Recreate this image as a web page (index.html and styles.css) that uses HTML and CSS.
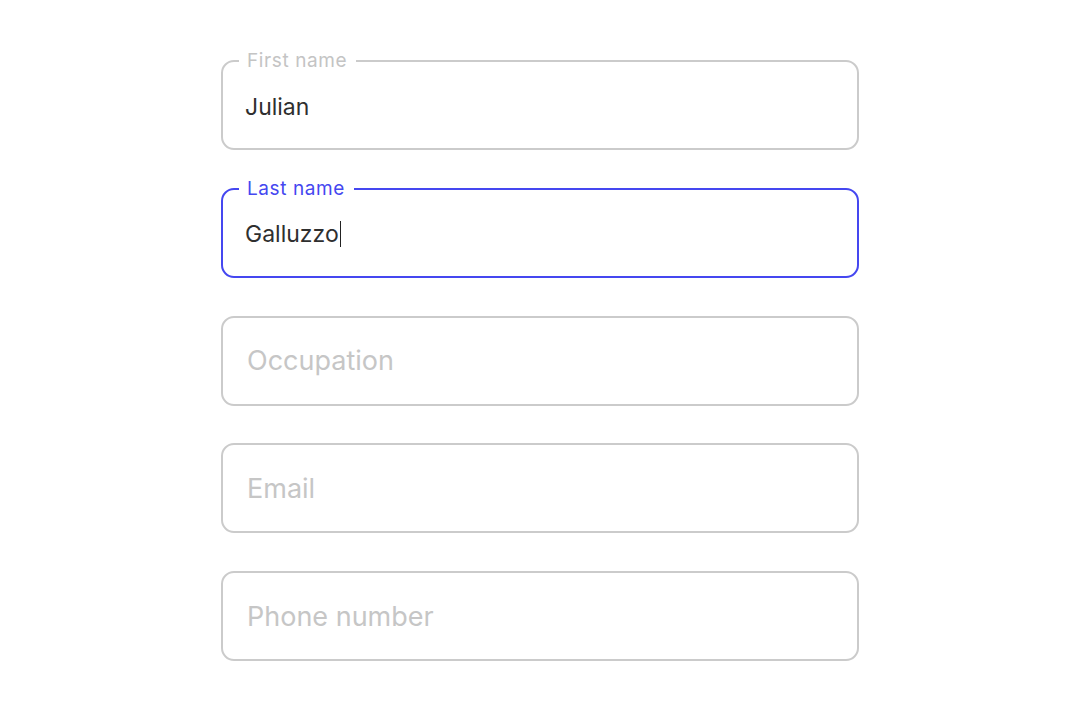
FILE: index.html
```html
<!DOCTYPE html>
<html lang="en">
<head>
<meta charset="utf-8">
<title>Form</title>
<link rel="stylesheet" href="styles.css">
</head>
<body>
<form class="form">
  <div class="field filled">
    <span class="label">First name</span>
    <span class="value">Julian</span>
  </div>
  <div class="field filled focused">
    <span class="label">Last name</span>
    <span class="value">Galluzzo<span class="caret"></span></span>
  </div>
  <div class="field">
    <span class="placeholder">Occupation</span>
  </div>
  <div class="field">
    <span class="placeholder">Email</span>
  </div>
  <div class="field">
    <span class="placeholder">Phone number</span>
  </div>
</form>
</body>
</html>
```

FILE: styles.css
```css
html, body {
  margin: 0;
  padding: 0;
  background: #ffffff;
}

body {
  font-family: Inter, "Noto Sans", "Liberation Sans", sans-serif;
  color: #333333;
}

.form {
  width: 638px;
  margin: 60px auto 0;
  padding-left: 1px;
  display: flex;
  flex-direction: column;
  gap: 37.75px;
}

.field {
  position: relative;
  box-sizing: border-box;
  height: 90px;
  border: 2px solid #cbcbcb;
  border-radius: 13px;
  display: flex;
  align-items: center;
  padding: 0 22px;
}

.field.filled {
  padding-top: 3px;
}

.field.focused {
  border-color: #4547f0;
}

.label {
  position: absolute;
  top: -11px;
  left: 16px;
  padding: 0 9px 0 8px;
  background: #ffffff;
  font-size: 19px;
  line-height: 20px;
  letter-spacing: 0.6px;
  color: #c4c4c4;
}

.focused .label {
  color: #4547f0;
}

.value {
  font-size: 23px;
  color: #2f2f2f;
  display: inline-flex;
  align-items: center;
}

.caret {
  display: inline-block;
  width: 1px;
  height: 26px;
  background: #222222;
  margin-left: 1px;
}

.placeholder {
  font-size: 27px;
  color: #c6c6c6;
  padding-left: 2px;
}
```
